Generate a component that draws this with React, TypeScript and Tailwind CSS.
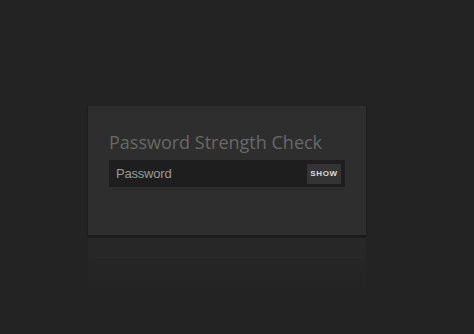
export default function App() {
  return (
    <div className="h-[334px] w-[474px] overflow-hidden bg-[#232323] pt-[106px] pl-[88px]">
      <div className="h-[129px] w-[278px] bg-[#2e2e2e] px-[21px] pt-[24px] shadow-[0_1px_2px_rgba(0,0,0,0.4)]">
        <h1 className="font-['Open_Sans',sans-serif] text-[18px] leading-[24px] text-[#686868]">
          Password Strength Check
        </h1>
        <div className="mt-[6px] flex h-[27px] w-[236px] items-center justify-between bg-[#1e1e1e] pl-[7px] pr-[4px]">
          <span className="font-['Liberation_Sans',Arial,sans-serif] text-[13px] tracking-[-0.2px] text-[#9a9a9a]">
            Password
          </span>
          <button className="flex h-[20px] w-[34px] items-center justify-center bg-[#343434] font-['Liberation_Sans',Arial,sans-serif] text-[8px] font-bold tracking-[0.6px] text-[#dcdcdc]">
            SHOW
          </button>
        </div>
      </div>
      <div className="h-[3px] w-[278px] bg-[#1c1c1c]" />
      <div className="h-[54px] w-[278px] bg-gradient-to-b from-[#282828] to-[#232323]">
        <div className="mx-[2px] h-[20px] border-b border-[#292929]" />
        <div className="mx-[2px] h-[14px] border-b border-[#262626]" />
      </div>
    </div>
  );
}
